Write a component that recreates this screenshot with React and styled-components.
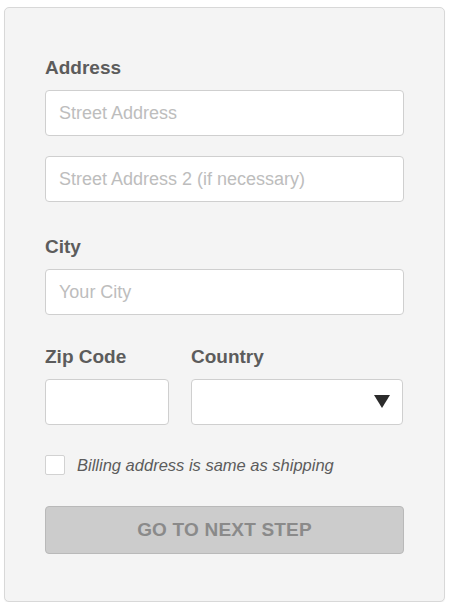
import React from "react";
import styled, { createGlobalStyle } from "styled-components";

const Global = createGlobalStyle`
  html, body { margin: 0; padding: 0; background: #ffffff; }
  body { font-family: "Liberation Sans", Arial, Helvetica, sans-serif; }
  * { box-sizing: border-box; }
`;

const Page = styled.div`
  padding: 7px 0 0 4px;
`;

const Card = styled.form`
  width: 441px;
  height: 595px;
  background: #f4f4f4;
  border: 1px solid #d8d8d8;
  border-radius: 5px;
  box-shadow: 0 1px 1px rgba(0, 0, 0, 0.06);
  padding: 50px 40px 0 40px;
  display: flex;
  flex-direction: column;
`;

const Field = styled.div`
  display: flex;
  flex-direction: column;
  margin-top: ${(p) => p.$top || 0}px;
`;

const Label = styled.label`
  font-size: 19px;
  line-height: 20px;
  font-weight: bold;
  color: #5c5c5c;
  margin-bottom: 12px;
`;

const Input = styled.input`
  width: 100%;
  height: 46px;
  border: 1px solid #cfcfcf;
  border-radius: 4px;
  background: #ffffff;
  padding: 0 13px;
  font-family: "Liberation Sans", Arial, sans-serif;
  font-size: 18px;
  color: #444;
  margin-top: ${(p) => p.$top || 0}px;
  outline: none;
  &::placeholder {
    color: #bdbdbd;
  }
`;

const Row = styled.div`
  display: grid;
  grid-template-columns: 124px 212px;
  column-gap: 22px;
  margin-top: 32px;
`;

const SelectBox = styled.div`
  position: relative;
  height: 46px;
  border: 1px solid #cfcfcf;
  border-radius: 4px;
  background: #ffffff;
`;

const Arrow = styled.svg`
  position: absolute;
  right: 12px;
  top: 15px;
`;

const CheckRow = styled.label`
  display: flex;
  align-items: center;
  gap: 12px;
  margin-top: 30px;
`;

const Box = styled.span`
  width: 20px;
  height: 20px;
  border: 1px solid #d2d2d2;
  background: #ffffff;
  border-radius: 2px;
  flex: none;
`;

const CheckText = styled.span`
  font-size: 16.5px;
  font-style: italic;
  color: #5c5c5c;
`;

const Button = styled.button`
  margin-top: 31px;
  width: 100%;
  height: 48px;
  background: #cccccc;
  border: 1px solid #b9b9b9;
  border-radius: 4px;
  color: #8a8a8a;
  font-family: "Liberation Sans", Arial, sans-serif;
  font-size: 19px;
  font-weight: bold;
  letter-spacing: 0.2px;
`;

export default function App() {
  return (
    <>
      <Global />
      <Page>
        <Card onSubmit={(e) => e.preventDefault()}>
          <Field>
            <Label>Address</Label>
            <Input placeholder="Street Address" />
            <Input $top={20} placeholder="Street Address 2 (if necessary)" />
          </Field>
          <Field $top={35}>
            <Label>City</Label>
            <Input placeholder="Your City" />
          </Field>
          <Row>
            <Field>
              <Label>Zip Code</Label>
              <Input />
            </Field>
            <Field>
              <Label>Country</Label>
              <SelectBox>
                <Arrow width="16" height="13" viewBox="0 0 16 13">
                  <polygon points="0,0 16,0 8,13" fill="#2b2b2b" />
                </Arrow>
              </SelectBox>
            </Field>
          </Row>
          <CheckRow>
            <Box />
            <CheckText>Billing address is same as shipping</CheckText>
          </CheckRow>
          <Button type="button">GO TO NEXT STEP</Button>
        </Card>
      </Page>
    </>
  );
}
